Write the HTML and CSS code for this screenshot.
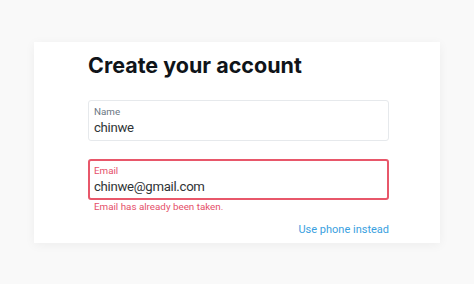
FILE: index.html
```html
<!DOCTYPE html>
<html lang="en">
<head>
    <meta charset="UTF-8">
    <title>Create your account</title>
    <link rel="stylesheet" href="styles.css">
</head>
<body>
    <div class="card">
        <h1>Create your account</h1>
        <div class="field">
            <span class="label">Name</span>
            <span class="value">chinwe</span>
        </div>
        <div class="field error">
            <span class="label">Email</span>
            <span class="value">chinwe@gmail.com</span>
        </div>
        <p class="msg">Email has already been taken.</p>
        <div class="switch"><a href="javascript:;">Use phone instead</a></div>
    </div>
</body>
</html>
```

FILE: styles.css
```css
html,
body {
    margin: 0;
    height: 100%;
}
body {
    background-color: #f9f9f9;
    display: flex;
    align-items: center;
    justify-content: center;
    font-family: Roboto, "Liberation Sans", sans-serif;
}
.card {
    width: 406px;
    height: 201px;
    box-sizing: border-box;
    padding: 9px 51px 0 54px;
    background-color: #fff;
    box-shadow: 0 2px 10px rgba(0,0,0,0.05);
}
h1 {
    margin: 0 0 21.5px;
    font-family: Inter, "Liberation Sans", sans-serif;
    font-size: 21.5px;
    font-weight: 700;
    color: #0f1419;
    line-height: 28px;
}
.field {
    display: flex;
    flex-direction: column;
    height: 41px;
    box-sizing: border-box;
    padding: 5px 5px 0;
    border: 1px solid #e6e9ec;
    border-radius: 3px;
}
.field + .field {
    margin-top: 18px;
}
.label {
    font-size: 9.8px;
    line-height: 12px;
    color: #6b7783;
}
.value {
    margin-top: 1px;
    font-size: 13.2px;
    line-height: 18px;
    letter-spacing: -0.3px;
    color: #2f3336;
}
.error {
    border: 2px solid #e8576a;
    padding: 4px 4px 0;
}
.error .label {
    color: #e5506a;
}
.msg {
    margin: 1px 0 0 6px;
    font-size: 9.8px;
    line-height: 12px;
    color: #e5506a;
}
.switch {
    margin-top: 8px;
    text-align: right;
    line-height: 14px;
}
.switch a {
    font-size: 11px;
    color: #3a9fe0;
    text-decoration: none;
}
```
